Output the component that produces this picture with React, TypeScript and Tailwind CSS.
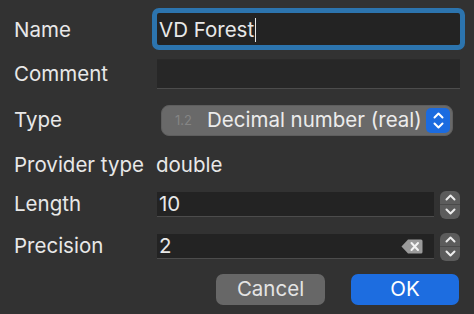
const Chevron = ({ up, color }: { up: boolean; color: string }) => (
  <svg width="11" height="7" viewBox="0 0 11 7">
    <polyline
      points={up ? "1.5,5.5 5.5,1.5 9.5,5.5" : "1.5,1.5 5.5,5.5 9.5,1.5"}
      fill="none"
      stroke={color}
      strokeWidth="2"
      strokeLinecap="round"
      strokeLinejoin="round"
    />
  </svg>
);

const Stepper = ({ blue = false }: { blue?: boolean }) => {
  if (blue) {
    return (
      <div className="flex h-[25px] w-[24px] flex-col items-center justify-center gap-[3px] rounded-[5px] bg-[#1b6be0]">
        <Chevron up color="#ffffff" />
        <Chevron up={false} color="#ffffff" />
      </div>
    );
  }
  return (
    <div className="flex h-[28px] w-[20px] flex-col overflow-hidden rounded-[6px] bg-[#5c5c5c]">
      <div className="flex flex-1 items-center justify-center border-b border-[#4a4a4a]">
        <Chevron up color="#ededed" />
      </div>
      <div className="flex flex-1 items-center justify-center">
        <Chevron up={false} color="#ededed" />
      </div>
    </div>
  );
};

// little backspace-style clear button
const ClearIcon = () => (
  <svg width="22" height="15" viewBox="0 0 22 15">
    <path d="M7 0.5 H20 a1.5 1.5 0 0 1 1.5 1.5 V13 a1.5 1.5 0 0 1 -1.5 1.5 H7 L0.5 7.5 Z" fill="#9b9b9b" />
    <path d="M10.5 4 L17 11 M17 4 L10.5 11" stroke="#f4f4f4" strokeWidth="2" strokeLinecap="round" />
  </svg>
);

const Label = ({ children }: { children: React.ReactNode }) => (
  <div className="w-[143px] shrink-0 text-[#e8e8e8]">{children}</div>
);

export default function App() {
  return (
    <div
      className="h-[314px] w-[474px] bg-[#323232] pl-[14px] pr-[14px] pt-[13px] text-[20.5px] leading-none text-[#e8e8e8]"
      style={{ fontFamily: "Inter, 'Liberation Sans', sans-serif" }}
    >
      {/* Name */}
      <div className="flex h-[32px] items-center pt-[2px]">
        <Label>Name</Label>
        <div className="-mt-[2px] flex h-[32px] flex-1 items-center rounded-[2px] bg-[#232323] pl-[2px] pt-[2px] outline-[5px] outline-solid outline-[#2c74ae]">
          <span>VD Forest</span>
          <span className="ml-[1px] h-[24px] w-[1px] bg-[#e8e8e8]" />
        </div>
      </div>

      {/* Comment */}
      <div className="mt-[14px] flex h-[30px] items-center">
        <Label>Comment</Label>
        <div className="h-[30px] flex-1 border-t border-b border-t-[#2a2a2a] border-b-[#4c4c4c] bg-[#272727]" />
      </div>

      {/* Type */}
      <div className="mt-[16px] flex h-[31px] items-center">
        <Label>Type</Label>
        <div className="ml-[4px] mr-[7px] flex h-[31px] flex-1 items-center rounded-[8px] border border-[#5e5e5e] bg-[#696969] pl-[13px] pr-[2px]">
          <span className="w-[32px] text-[13px] text-[#858585]">1.2</span>
          <span className="flex-1 text-[#ececec]">Decimal number (real)</span>
          <Stepper blue />
        </div>
      </div>

      {/* Provider type */}
      <div className="mt-[14px] flex h-[30px] items-center">
        <div className="w-[142px] shrink-0">Provider type</div>
        <div>double</div>
      </div>

      {/* Length */}
      <div className="mt-[9px] flex h-[31px] items-center">
        <Label>Length</Label>
        <div className="flex h-[25px] flex-1 items-center border-b border-[#4c4c4c] bg-[#232323] pl-[2px]">10</div>
        <div className="ml-[6px]">
          <Stepper />
        </div>
      </div>

      {/* Precision */}
      <div className="mt-[11px] flex h-[31px] items-center">
        <Label>Precision</Label>
        <div className="flex h-[25px] flex-1 items-center border-b border-[#4c4c4c] bg-[#232323] pl-[2px] pr-[11px]">
          <span className="flex-1">2</span>
          <ClearIcon />
        </div>
        <div className="ml-[6px]">
          <Stepper />
        </div>
      </div>

      {/* Buttons */}
      <div className="mt-[12px] flex h-[31px] justify-end gap-[26px] pr-[1px]">
        <button className="h-[31px] w-[109px] rounded-[7px] bg-[#676767] text-[#e4e4e4]">Cancel</button>
        <button className="h-[31px] w-[108px] rounded-[7px] bg-[#1d6de0] text-white">OK</button>
      </div>
    </div>
  );
}
